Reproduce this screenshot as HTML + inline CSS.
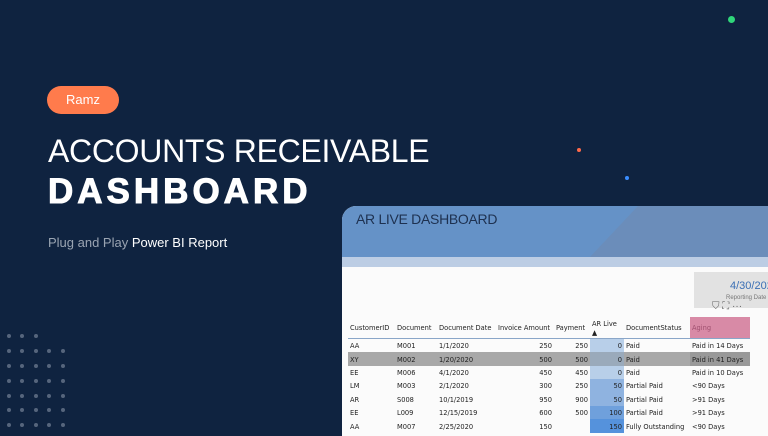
<!DOCTYPE html>
<html><head><style>
body{margin:0;width:768px;height:432px;overflow:hidden;background:#0f2340;font-family:"Liberation Sans",sans-serif;position:relative}
.abs{position:absolute}
.dot{position:absolute;width:4px;height:4px;border-radius:50%;background:#56657c}
table{border-collapse:collapse;table-layout:fixed;font-size:7.4px;color:#222;font-family:"DejaVu Sans Condensed","Liberation Sans",sans-serif}
td,th{height:13.4px;padding:0 2px;white-space:nowrap;overflow:hidden}
th{font-weight:normal;text-align:left;height:21px;border-bottom:1px solid #8aa6c8}
.r{text-align:right}
tr.g td{background:#a8a8a8}
</style></head><body>
<div class="abs" style="left:47px;top:86px;width:72px;height:28px;border-radius:14px;background:#ff7b4c;color:#fff;font-size:13px;line-height:28px;text-align:center">Ramz</div>
<div class="abs" style="left:48px;top:133px;color:#fff;font-size:32px;letter-spacing:-0.3px;white-space:nowrap">ACCOUNTS RECEIVABLE</div>
<div class="abs" style="left:48px;top:172px;color:#fff;font-size:35px;font-weight:900;letter-spacing:4px;white-space:nowrap;-webkit-text-stroke:1px #fff">DASHBOARD</div>
<div class="abs" style="left:48px;top:235px;font-size:13px;color:#9aa4b2;white-space:nowrap">Plug and Play <span style="color:#fff">Power BI Report</span></div>
<div class="abs" style="left:728px;top:16px;width:7px;height:7px;border-radius:50%;background:#2fd67a"></div>
<div class="abs" style="left:577px;top:148px;width:4px;height:4px;border-radius:50%;background:#ff6a4a"></div>
<div class="abs" style="left:625px;top:176px;width:4px;height:4px;border-radius:50%;background:#3a8dff"></div>
<div id="dots"></div>
<div class="abs" style="left:342px;top:206px;width:430px;height:230px;background:#fbfbfb;border-top-left-radius:14px;overflow:hidden">
 <div class="abs" style="left:0;top:0;width:430px;height:51px;background:#6592c7"></div>
 <div class="abs" style="left:0;top:0;width:430px;height:51px;background:#6b8dba;clip-path:polygon(296px 0,430px 0,430px 51px,248px 51px)"></div>
 <div class="abs" style="left:0;top:51px;width:430px;height:10px;background:#bccde4"></div>
 <div class="abs" style="left:14px;top:5px;color:#1e3150;font-size:14px;letter-spacing:-0.3px">AR LIVE DASHBOARD</div>
 <div class="abs" style="left:352px;top:66px;width:80px;height:36px;background:#e2e2e2"></div>
 <div class="abs" style="left:388px;top:74px;color:#3a6fb5;font-size:11px">4/30/2020</div>
 <div class="abs" style="left:384px;top:89px;color:#777;font-size:6px">Reporting Date</div>
 <div class="abs" style="left:370px;top:95px;color:#666;font-size:10px">⛉ ⛶ ···</div>
 <table class="abs" style="left:6px;top:111px;width:402px">
  <colgroup><col style="width:47px"><col style="width:42px"><col style="width:59px"><col style="width:58px"><col style="width:36px"><col style="width:34px"><col style="width:66px"><col style="width:60px"></colgroup>
  <tr><th>CustomerID</th><th>Document</th><th>Document Date</th><th>Invoice Amount</th><th>Payment</th><th>AR Live<br>▲</th><th>DocumentStatus</th><th style="background:#d88aa6;color:#a05070">Aging</th></tr>
  <tr><td>AA</td><td>M001</td><td>1/1/2020</td><td class="r">250</td><td class="r">250</td><td class="r" style="background:#b8cfe9">0</td><td>Paid</td><td>Paid in 14 Days</td></tr>
  <tr class="g"><td>XY</td><td>M002</td><td>1/20/2020</td><td class="r">500</td><td class="r">500</td><td class="r" style="background:#9aaabb">0</td><td>Paid</td><td style="background:#999">Paid in 41 Days</td></tr>
  <tr><td>EE</td><td>M006</td><td>4/1/2020</td><td class="r">450</td><td class="r">450</td><td class="r" style="background:#b8cfe9">0</td><td>Paid</td><td>Paid in 10 Days</td></tr>
  <tr><td>LM</td><td>M003</td><td>2/1/2020</td><td class="r">300</td><td class="r">250</td><td class="r" style="background:#8fb3e0">50</td><td>Partial Paid</td><td>&lt;90 Days</td></tr>
  <tr><td>AR</td><td>S008</td><td>10/1/2019</td><td class="r">950</td><td class="r">900</td><td class="r" style="background:#8fb3e0">50</td><td>Partial Paid</td><td>&gt;91 Days</td></tr>
  <tr><td>EE</td><td>L009</td><td>12/15/2019</td><td class="r">600</td><td class="r">500</td><td class="r" style="background:#6fa0dc">100</td><td>Partial Paid</td><td>&gt;91 Days</td></tr>
  <tr><td>AA</td><td>M007</td><td>2/25/2020</td><td class="r">150</td><td class="r"></td><td class="r" style="background:#5592dc">150</td><td>Fully Outstanding</td><td>&lt;90 Days</td></tr>
 </table>
</div>
<script>
var h='',xs=[9,22,36,49,63],ys=[336,351,366,381,396,410,425];
ys.forEach(function(y,i){xs.forEach(function(x,j){if(i==0&&j>2)return;h+='<div class="dot" style="left:'+(x-2)+'px;top:'+(y-2)+'px"></div>';});});
document.getElementById('dots').innerHTML=h;
</script>
</body></html>
